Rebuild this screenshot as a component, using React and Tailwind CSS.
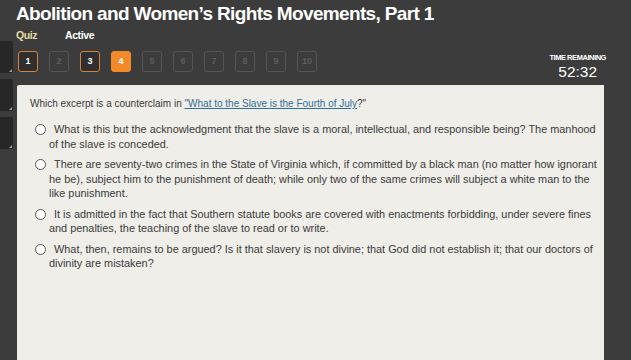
import React from 'react';

const questions = [1, 2, 3, 4, 5, 6, 7, 8, 9, 10];

const options = [
  'What is this but the acknowledgment that the slave is a moral, intellectual, and responsible being? The manhood of the slave is conceded.',
  'There are seventy-two crimes in the State of Virginia which, if committed by a black man (no matter how ignorant he be), subject him to the punishment of death; while only two of the same crimes will subject a white man to the like punishment.',
  'It is admitted in the fact that Southern statute books are covered with enactments forbidding, under severe fines and penalties, the teaching of the slave to read or to write.',
  'What, then, remains to be argued? Is it that slavery is not divine; that God did not establish it; that our doctors of divinity are mistaken?',
];

const NumBox = ({ n }) => {
  let cls = 'border-[#545654] text-[#5c5e5c]';
  if (n === 1 || n === 3) cls = 'border-[#d9823a] text-white bg-[#2e2f2e]';
  if (n === 4) cls = 'border-[#f28a2a] bg-[#f28a2a] text-white';
  return (
    <div className={`w-[20px] h-[21px] border-[1.5px] rounded-[3px] flex items-center justify-center text-[9px] font-bold ${cls}`}>
      {n}
    </div>
  );
};

const SideTile = () => (
  <div className="relative w-[13px] h-[32px] bg-[#262726] rounded-r-[2px]">
    <div className="absolute right-[1px] bottom-[1px] w-0 h-0 border-l-[3px] border-l-transparent border-b-[3px] border-b-[#a0a0a0]" />
  </div>
);

export default function App() {
  return (
    <div className="w-[631px] h-[360px] overflow-hidden bg-[#3b3c3b] flex flex-col" style={{ fontFamily: '"Liberation Sans", Arial, sans-serif' }}>
      <div className="pl-[16px] pt-[3px]">
        <h1 className="text-[19px] font-bold text-white tracking-[-0.65px] leading-[22px]">
          Abolition and Women’s Rights Movements, Part 1
        </h1>
        <div className="flex mt-[4px] text-[10.5px] leading-[12px] font-bold tracking-[-0.4px]">
          <span className="text-[#e6dba2] w-[49px]">Quiz</span>
          <span className="text-white">Active</span>
        </div>
      </div>
      <div className="flex">
        <div className="flex flex-col gap-[6px]">
          <SideTile />
          <SideTile />
          <SideTile />
        </div>
        <div className="flex-1 flex flex-col">
          <div className="flex items-start justify-between pl-[5px] pr-[25px] pt-[10px] h-[31px]">
            <div className="flex gap-[11px]">
              {questions.map((n) => (
                <NumBox key={n} n={n} />
              ))}
            </div>
            <div className="flex flex-col items-center text-white mt-[2px]">
              <span className="text-[7.5px] leading-[10px] font-bold tracking-[-0.45px]">TIME REMAINING</span>
              <span className="text-[15.5px] leading-[17px]">52:32</span>
            </div>
          </div>
          <div className="mt-[13px] ml-[4px] mr-[27px] h-[300px] bg-[#efeee9] rounded-tl-[2px] pl-[13px] pr-[4px] pt-[12px] text-[#3b3b3b]">
            <p className="text-[10px] leading-[14px]">
              Which excerpt is a counterclaim in{' '}
              <span className="text-[#2f6f9a] underline">"What to the Slave is the Fourth of July</span>?"
            </p>
            <div className="mt-[11px] flex flex-col gap-[6px]">
              {options.map((o, i) => (
                <div key={i} className="relative text-[10.9px] leading-[14.5px] pl-[19px]">
                  <span className="absolute left-[5px] top-[2px] w-[11px] h-[11px] rounded-full border-[1.5px] border-[#555] bg-white" />
                  <span className="inline-block w-[5px]" />
                  {o}
                </div>
              ))}
            </div>
          </div>
        </div>
      </div>
    </div>
  );
}
